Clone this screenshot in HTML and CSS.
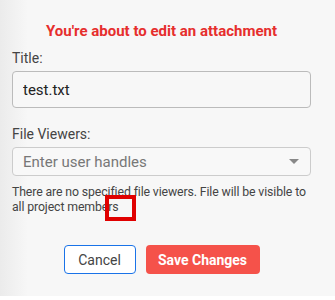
FILE: index.html
```html
<!DOCTYPE html>
<html lang="en">
<head>
    <meta charset="UTF-8">
    <meta name="viewport" content="width=device-width, initial-scale=1.0">
    <title>Edit attachment</title>
    <link rel="stylesheet" href="styles.css">
</head>
<body>
    <div class="dialog">
        <h2 class="dialog-title">You're about to edit an attachment</h2>

        <!-- title field -->
        <label class="field-label" for="title">Title:</label>
        <input class="text-input" type="text" id="title" value="test.txt">

        <!-- viewers field -->
        <label class="field-label viewers-label">File Viewers:</label>
        <div class="select-box">
            <span class="placeholder">Enter user handles</span>
            <span class="caret"></span>
        </div>
        <p class="hint">There are no specified file viewers. File will be visible to all project membe<span class="marked">rs<span class="highlight"></span></span></p>

        <div class="actions">
            <button class="btn btn-cancel">Cancel</button>
            <button class="btn btn-save">Save Changes</button>
        </div>
    </div>
</body>
</html>
```

FILE: styles.css
```css
body {
    font-family: Roboto, "Liberation Sans", Arial, sans-serif;
    margin: 0;
    padding: 0;
    background-color: #ffffff;
    color: #444;
}
.dialog {
    height: 296px;
    box-sizing: border-box;
    padding: 22px 24px 0 12px;
    background: linear-gradient(to right, #ebebeb, #f7f7f7 28px);
}
.dialog-title {
    margin: 0 0 10px 0;
    font-size: 15px;
    font-weight: bold;
    color: #e62e2d;
    text-align: center;
    line-height: 18px;
}
.field-label {
    display: block;
    font-size: 14px;
    line-height: 16px;
    margin-bottom: 5px;
}
.text-input {
    display: block;
    width: 100%;
    box-sizing: border-box;
    height: 37px;
    padding: 0 10px;
    font-family: inherit;
    font-size: 15px;
    color: #222;
    background: #f7f7f7;
    border: 1px solid #bbb;
    border-radius: 4px;
    margin: 0;
}
.viewers-label {
    margin-top: 18px;
}
.select-box {
    display: flex;
    align-items: center;
    justify-content: space-between;
    height: 29px;
    box-sizing: border-box;
    padding: 0 10px;
    border: 1px solid #ccc;
    border-radius: 4px;
    background: #f8f8f8;
}
.placeholder {
    font-size: 15px;
    color: #777;
}
.caret {
    width: 0;
    height: 0;
    border-left: 5px solid transparent;
    border-right: 5px solid transparent;
    border-top: 5px solid #888;
    margin-right: 1px;
}
.hint {
    margin: 9px -8px 0 0;
    font-size: 12.3px;
    letter-spacing: -0.12px;
    line-height: 15px;
    color: #444;
}
.marked {
    position: relative;
}
.highlight {
    position: absolute;
    left: -3px;
    top: -5px;
    width: 31px;
    height: 26px;
    box-sizing: border-box;
    border: 4px solid #e00000;
}
.actions {
    display: flex;
    justify-content: center;
    gap: 10px;
    margin-top: 30px;
}
.btn {
    height: 29px;
    border-radius: 4px;
    font-family: inherit;
    font-size: 14px;
    cursor: pointer;
}
.btn-cancel {
    width: 72px;
    background: #fff;
    border: 1px solid #1a73e8;
    color: #444;
}
.btn-save {
    width: 114px;
    background: #f5524a;
    border: none;
    color: #fff;
    font-weight: bold;
}
```
